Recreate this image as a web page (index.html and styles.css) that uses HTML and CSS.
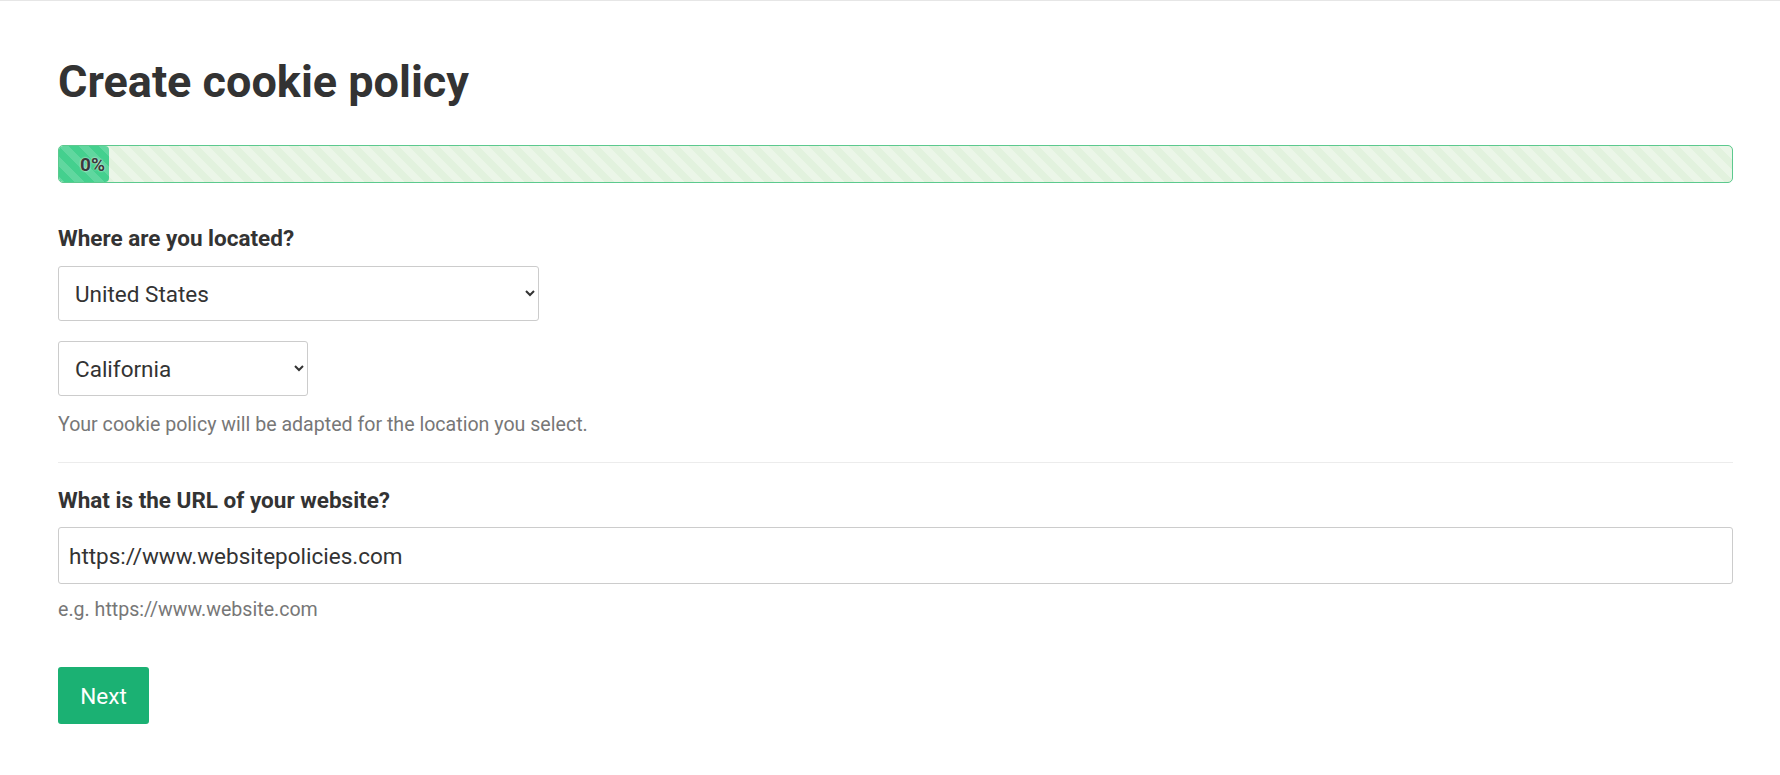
FILE: index.html
```html
<!DOCTYPE html>
<html lang="en">
<head>
<meta charset="utf-8">
<title>Create cookie policy</title>
<link rel="stylesheet" href="styles.css">
</head>
<body>
<div class="page">
  <h1 class="title">Create cookie policy</h1>
  <div class="progress">
    <div class="progress-bar">0%</div>
  </div>
  <section class="field">
    <label class="field-label" for="country">Where are you located?</label>
    <select id="country" class="select select-country">
      <option>United States</option>
    </select>
    <select id="state" class="select select-state">
      <option>California</option>
    </select>
    <p class="help help-location">Your cookie policy will be adapted for the location you select.</p>
  </section>
  <hr class="divider">
  <section class="field">
    <label class="field-label" for="url">What is the URL of your website?</label>
    <input id="url" class="text-input" type="text" value="https://www.websitepolicies.com">
    <p class="help help-url">e.g. https://www.website.com</p>
  </section>
  <button class="btn-next" type="button">Next</button>
</div>
</body>
</html>
```

FILE: styles.css
```css
html, body {
  margin: 0;
  padding: 0;
  background: #ffffff;
}
body {
  border-top: 1px solid #e6e6e6;
  font-family: Roboto, "Liberation Sans", Arial, sans-serif;
  color: #333333;
}
.page {
  padding: 54px 47px 40px 58px;
}
.title {
  margin: 0;
  font-size: 45px;
  line-height: 54px;
  font-weight: 700;
  color: #333333;
}
.progress {
  margin-top: 36px;
  height: 38px;
  box-sizing: border-box;
  border: 1px solid #5cc98e;
  border-radius: 5px;
  background-color: #e2f2de;
  background-image: linear-gradient(45deg, rgba(255,255,255,.3) 25%, transparent 25%, transparent 50%, rgba(255,255,255,.3) 50%, rgba(255,255,255,.3) 75%, transparent 75%, transparent);
  background-size: 20px 20px;
  display: flex;
  overflow: hidden;
}
.progress-bar {
  width: 50px;
  border-radius: 4px;
  background-color: #44d08e;
  background-image: linear-gradient(45deg, rgba(255,255,255,.15) 25%, transparent 25%, transparent 50%, rgba(255,255,255,.15) 50%, rgba(255,255,255,.15) 75%, transparent 75%, transparent);
  background-size: 20px 20px;
  display: flex;
  align-items: center;
  justify-content: flex-end;
  padding-right: 4px;
  box-sizing: border-box;
  font-size: 19px;
  font-weight: 700;
  color: #3a3a3a;
  text-shadow: 0 0 2px #ffffff;
}
.field {
  display: flex;
  flex-direction: column;
  align-items: flex-start;
}
.field-label {
  margin-top: 40px;
  font-size: 22.5px;
  line-height: 30px;
  font-weight: 700;
  color: #333333;
}
.select {
  height: 55px;
  box-sizing: border-box;
  border: 1px solid #cccccc;
  border-radius: 3px;
  background-color: #ffffff;
  font-family: Roboto, "Liberation Sans", Arial, sans-serif;
  font-size: 22.5px;
  color: #333333;
  padding: 0 8px 0 12px;
}
.select-country {
  width: 481px;
  margin-top: 13px;
}
.select-state {
  width: 250px;
  margin-top: 20px;
}
.help {
  margin: 0;
  font-size: 19.6px;
  line-height: 27px;
  color: #777777;
}
.help-location {
  margin-top: 15px;
}
.divider {
  margin: 24px 0 0;
  border: 0;
  border-top: 1px solid #ececec;
  height: 0;
}
.field + .divider + .field .field-label {
  margin-top: 22px;
}
.text-input {
  margin-top: 12px;
  width: 100%;
  height: 57px;
  box-sizing: border-box;
  border: 1px solid #cccccc;
  border-radius: 3px;
  padding: 0 10px;
  font-family: Roboto, "Liberation Sans", Arial, sans-serif;
  font-size: 22.5px;
  color: #333333;
}
.help-url {
  margin-top: 12px;
}
.btn-next {
  margin-top: 44px;
  width: 91px;
  height: 57px;
  border: 0;
  border-radius: 3px;
  background: #1bb173;
  color: #ffffff;
  font-family: Roboto, "Liberation Sans", Arial, sans-serif;
  font-size: 22.5px;
  font-weight: 400;
  cursor: pointer;
}
```
